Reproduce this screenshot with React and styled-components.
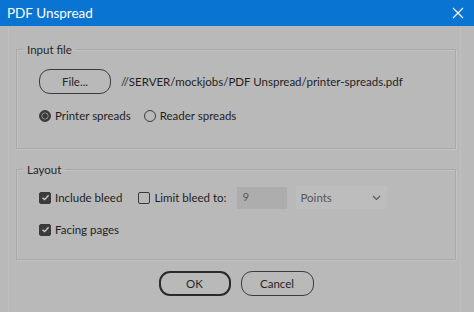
import React from 'react'
import styled, { createGlobalStyle } from 'styled-components'

const Global = createGlobalStyle`
html, body { margin: 0; padding: 0; }
body {
  width: 474px;
  height: 312px;
  overflow: hidden;
  background: #b9b9b9;
  font-family: "Lato", "Liberation Sans", sans-serif;
}
`

const Window = styled.div`
width: 474px;
height: 312px;
display: flex;
flex-direction: column;
background: #b9b9b9;
`

const TitleBar = styled.div`
height: 26px;
background: #0a74d2;
display: flex;
align-items: center;
justify-content: space-between;
padding: 0 10px 0 7px;
color: #fff;
font-size: 13.5px;
flex-shrink: 0;
`

const Body = styled.div`
flex: 1;
margin: 0 13px 0 8px;
padding: 17px 4px 0 7px;
border-left: 1px solid #bfbfbf;
border-right: 1px solid #bfbfbf;
display: flex;
flex-direction: column;
`

const Group = styled.fieldset`
margin: 0 0 ${p => p.$mb}px;
padding: ${p => p.$pad};
border: 1px solid #a9a9a9;
box-shadow: 1px 1px 0 #c3c3c3, inset 1px 1px 0 #c3c3c3;
min-width: 0;
display: flex;
flex-direction: column;
gap: ${p => p.$gap}px;
flex-shrink: 0;
`

const Legend = styled.legend`
margin-left: -16px;
padding: 0 4px;
font-size: 11.5px;
color: #262626;
`

const Row = styled.div`
display: flex;
align-items: center;
gap: ${p => p.$gap || 10}px;
`

const PillButton = styled.button`
width: ${p => p.$w}px;
height: 25px;
border-radius: 11px;
border: ${p => (p.$primary ? '2px solid #2a2a2a' : '1.5px solid #3c3c3c')};
background: transparent;
font-family: inherit;
font-size: 11.5px;
color: #262626;
padding: 0;
`

const Label = styled.span`
font-size: 11.5px;
color: #1f1f1f;
white-space: nowrap;
`

const Option = styled.label`
display: flex;
align-items: center;
gap: 4px;
`

const Radio = styled.span`
width: 12px;
height: 12px;
border-radius: 50%;
box-sizing: border-box;
border: 1px solid #3b3b3b;
background: ${p =>
    p.$on
      ? 'radial-gradient(circle, #3b3b3b 0 2.4px, #8e8e8e 2.9px 3.3px, #3b3b3b 3.8px)'
      : 'transparent'};
`

const Check = styled.span`
width: 12px;
height: 12px;
box-sizing: border-box;
border-radius: 2px;
border: 1px solid #3b3b3b;
background: ${p => (p.$on ? '#3b3b3b' : 'transparent')};
display: flex;
align-items: center;
justify-content: center;
`

const NumberField = styled.div`
width: 50px;
height: 22px;
box-sizing: border-box;
background: #adadad;
color: #5a5a5a;
font-size: 11.5px;
padding: 3px 6px;
margin-left: ${p => p.$offset}px;
`

const Select = styled.div`
width: 91px;
height: 23px;
box-sizing: border-box;
background: #bdbdbd;
color: #555;
font-size: 11.5px;
padding: 0 6px 0 5px;
margin-left: -7px;
display: flex;
align-items: center;
justify-content: space-between;
`

const Footer = styled.div`
display: flex;
justify-content: center;
gap: 10px;
`

const Tick = () => (
  <svg width="9" height="9" viewBox="0 0 9 9">
    <path d="M1.5 4.7 L3.6 6.6 L7.6 2.2" fill="none" stroke="#d0d0d0" strokeWidth="1.4" />
  </svg>
)

export default function App() {
  return (
    <Window>
      <Global />
      <TitleBar>
        <span>PDF Unspread</span>
        <svg width="12" height="12" viewBox="0 0 12 12">
          <path d="M1 1 L11 11 M11 1 L1 11" stroke="#fff" strokeWidth="1.1" />
        </svg>
      </TitleBar>
      <Body>
        <Group $pad="13px 0 26px 22px" $gap={15} $mb={14}>
          <Legend>Input file</Legend>
          <Row>
            <PillButton $w={72}>File...</PillButton>
            <Label>//SERVER/mockjobs/PDF Unspread/printer-spreads.pdf</Label>
          </Row>
          <Row $gap={13}>
            <Option>
              <Radio $on />
              <Label>Printer spreads</Label>
            </Option>
            <Option>
              <Radio />
              <Label>Reader spreads</Label>
            </Option>
          </Row>
        </Group>
        <Group $pad="10px 0 23px 22px" $gap={14} $mb={11}>
          <Legend>Layout</Legend>
          <Row $gap={16}>
            <Option>
              <Check $on><Tick /></Check>
              <Label>Include bleed</Label>
            </Option>
            <Option>
              <Check />
              <Label>Limit bleed to:</Label>
            </Option>
            <NumberField $offset={-6}>9</NumberField>
            <Select>
              <span>Points</span>
              <svg width="9" height="6" viewBox="0 0 9 6">
                <path d="M1 1 L4.5 4.5 L8 1" fill="none" stroke="#555" strokeWidth="1.1" />
              </svg>
            </Select>
          </Row>
          <Row>
            <Option>
              <Check $on><Tick /></Check>
              <Label>Facing pages</Label>
            </Option>
          </Row>
        </Group>
        <Footer>
          <PillButton $w={72} $primary>OK</PillButton>
          <PillButton $w={73}>Cancel</PillButton>
        </Footer>
      </Body>
    </Window>
  )
}
